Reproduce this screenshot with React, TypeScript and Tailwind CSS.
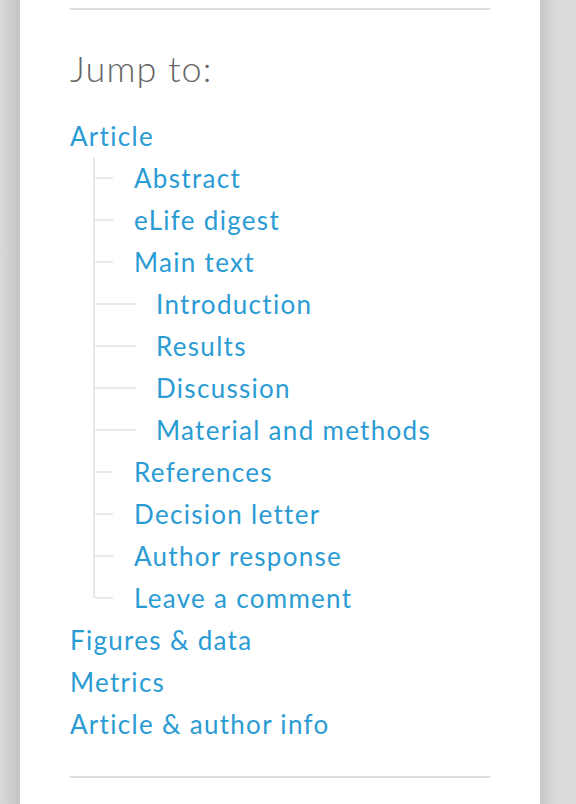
import React from "react";

type Item = { label: string; level: 0 | 1 | 2 };

const items: Item[] = [
  { label: "Abstract", level: 1 },
  { label: "eLife digest", level: 1 },
  { label: "Main text", level: 1 },
  { label: "Introduction", level: 2 },
  { label: "Results", level: 2 },
  { label: "Discussion", level: 2 },
  { label: "Material and methods", level: 2 },
  { label: "References", level: 1 },
  { label: "Decision letter", level: 1 },
  { label: "Author response", level: 1 },
  { label: "Leave a comment", level: 1 },
];

const linkClass =
  "text-[26px] leading-none tracking-[0.05em] text-[#2b9bd4] hover:underline cursor-pointer whitespace-nowrap";

const TreeRow: React.FC<{ item: Item; last: boolean }> = ({ item, last }) => (
  <li className="flex h-[42px] items-center">
    <div className="w-[23px] shrink-0" />
    <div className={`w-[2px] shrink-0 bg-[#e8e8e8] ${last ? "h-1/2 self-start" : "self-stretch"}`} />
    <div
      className={`h-[2px] shrink-0 bg-[#e8e8e8] ${item.level === 2 ? "w-[41px]" : "w-[18px]"}`}
    />
    <a className={`${linkClass} ${item.level === 2 ? "ml-[20px]" : "ml-[21px]"}`}>{item.label}</a>
  </li>
);

export default function App() {
  return (
    <div
      className="flex min-h-screen bg-[#dcdadb]"
      style={{ fontFamily: "Lato, 'Noto Sans', sans-serif" }}
    >
      <div className="w-[20px] shrink-0 bg-gradient-to-r from-[#d8d8d8] to-[#c4c4c4]" />
      <div className="flex-1 bg-white px-[50px] pt-[8px]">
        <hr className="border-0 h-[2px] bg-[#dddddd]" />
        <h2 className="mt-[38px] h-[40px] text-[36px] leading-[40px] tracking-[0.03em] font-light text-[#666666]">
          Jump to:
        </h2>
        <nav className="mt-[27px]">
          <ul>
            <li className="flex h-[42px] items-center">
              <a className={linkClass}>Article</a>
            </li>
            <li>
              <ul>
                {items.map((item, i) => (
                  <TreeRow key={item.label} item={item} last={i === items.length - 1} />
                ))}
              </ul>
            </li>
            {["Figures & data", "Metrics", "Article & author info"].map((label) => (
              <li key={label} className="flex h-[42px] items-center">
                <a className={linkClass}>{label}</a>
              </li>
            ))}
          </ul>
        </nav>
        <hr className="mt-[31px] border-0 h-[2px] bg-[#dddddd]" />
      </div>
      <div className="w-[36px] shrink-0 bg-gradient-to-r from-[#c8c8c8] via-[#dcdadb] to-[#dcdadb]" />
    </div>
  );
}
